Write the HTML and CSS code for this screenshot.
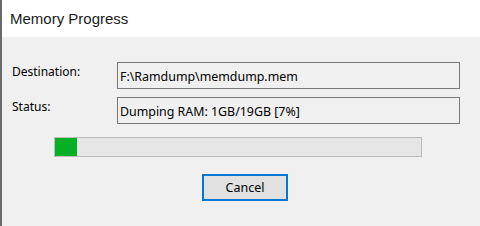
FILE: index.html
```html
<!DOCTYPE html>
<html lang="en">
<head>
    <meta charset="UTF-8">
    <meta name="viewport" content="width=device-width, initial-scale=1.0">
    <title>Memory Progress</title>
    <link rel="stylesheet" href="styles.css">
</head>
<body>
    <div class="window">
        <div class="title-bar">Memory Progress</div>

        <div class="content">
            <div class="field-row">
                <span class="field-label">Destination:</span>
                <div class="field-box">F:\Ramdump\memdump.mem</div>
            </div>
            <div class="field-row">
                <span class="field-label">Status:</span>
                <div class="field-box">Dumping RAM: 1GB/19GB [7%]</div>
            </div>

            <div class="progress">
                <div class="progress-fill" style="width: 6%"></div>
            </div>

            <div class="actions">
                <button class="cancel-btn">Cancel</button>
            </div>
        </div>
    </div>
</body>
</html>
```

FILE: styles.css
```css
html, body {
    margin: 0;
    padding: 0;
    height: 100%;
}
body {
    font-family: 'Noto Sans', 'Open Sans', sans-serif;
    font-size: 12px;
    color: #000;
    background-color: #f0f0f0;
}
.window {
    height: 100%;
    border-left: 2px solid #6a6a6a;
    box-sizing: border-box;
}
.title-bar {
    height: 37px;
    background-color: #fff;
    font-family: 'Liberation Sans', Arial, sans-serif;
    font-size: 15px;
    line-height: 37px;
    padding-left: 8px;
    color: #1a1a1a;
}
.content {
    padding: 25px 0 0 10px;
}
.field-row {
    display: flex;
    align-items: flex-start;
    margin-bottom: 8px;
}
.field-label {
    width: 105px;
    line-height: 17px;
    padding-top: 1px;
}
.field-box {
    width: 339px;
    height: 25px;
    border: 1px solid #7a7a7a;
    font-size: 12.4px;
    line-height: 27px;
    padding-left: 2px;
}
.progress {
    margin: 13px 0 0 42px;
    width: 366px;
    height: 18px;
    border: 1px solid #bcbcbc;
    background-color: #e6e6e6;
}
.progress-fill {
    height: 100%;
    background-color: #06b025;
}
.actions {
    margin-top: 17px;
    padding-left: 190px;
}
.cancel-btn {
    width: 86px;
    height: 27px;
    border: 2px solid #0078d7;
    background-color: #e1e1e1;
    font-family: 'Noto Sans', 'Open Sans', sans-serif;
    font-size: 12.5px;
    color: #000;
    padding: 0;
}
```
